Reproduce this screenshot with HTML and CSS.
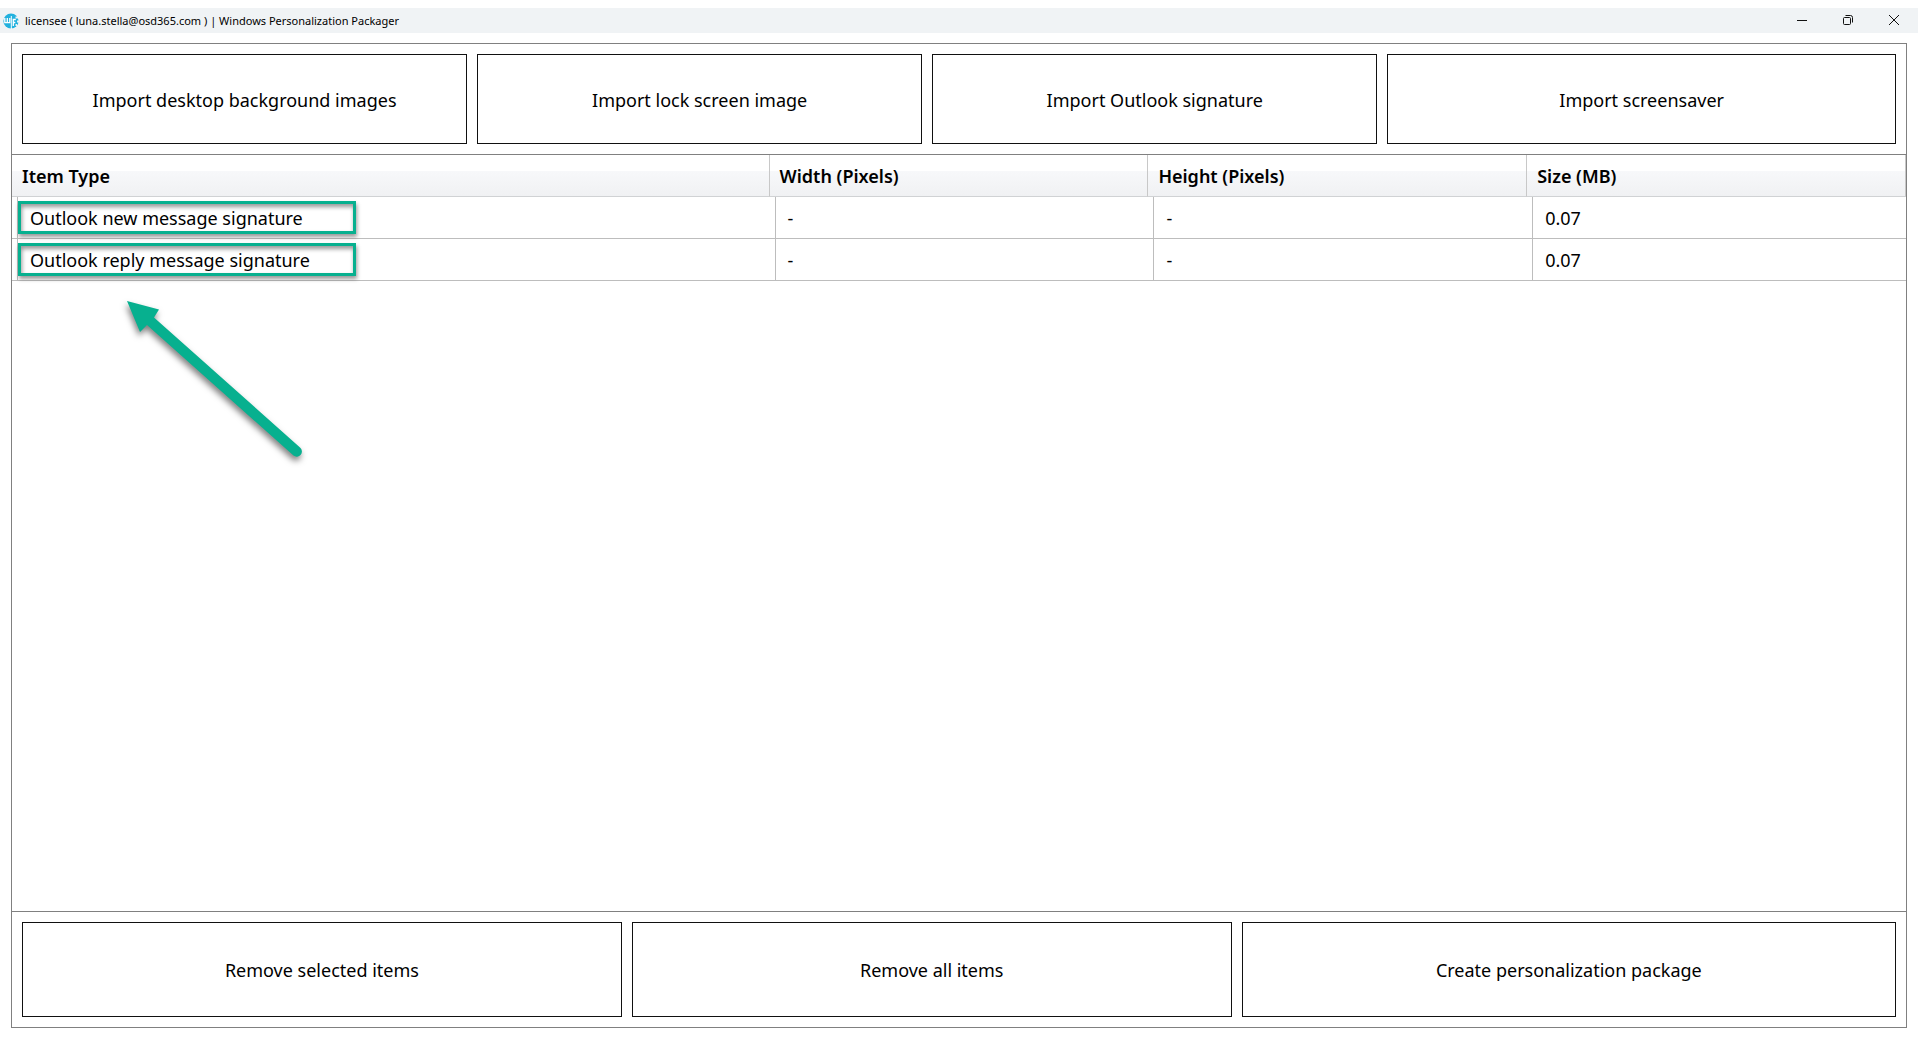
FILE: index.html
```html
<!DOCTYPE html>
<html lang="en">
  <head>
    <meta charset="UTF-8" />
    <title>Windows Personalization Packager</title>
    <link rel="stylesheet" href="styles.css">
  </head>

  <body>
    <!-- title bar -->
    <header class="titlebar">
      <svg class="logo" viewBox="0 0 16 16" aria-hidden="true">
        <circle cx="8" cy="8" r="7.6" fill="#22b1de" />
        <path d="M1.8 5v4.600h5V5M4.300 5v4.600" fill="none" stroke="#fff" stroke-width="1.300" />
        <path d="M8.300 3v13" stroke="#fff" stroke-width="1" />
        <path d="M10.300 13V6.500h2.500M10.300 9.500h2" fill="none" stroke="#fff" stroke-width="1.300" />
        <path d="M12.500 3.500h4v2h-4zM14 7.500h2.500v2H14zM12.500 11h1.500v2h-1.500z" fill="#f0f3f5" />
      </svg>
      <span class="title">licensee ( luna.stella@osd365.com ) | Windows Personalization Packager</span>
      <button class="win-btn" type="button" aria-label="Minimize">
        <svg viewBox="0 0 12 12"><path d="M1 6.5h10" /></svg>
      </button>
      <button class="win-btn" type="button" aria-label="Restore">
        <svg viewBox="0 0 12 12">
          <rect x="1.5" y="3.5" width="7" height="7" rx="1" />
          <path d="M3.5 1.5H8.5a2 2 0 0 1 2 2V8.5" />
        </svg>
      </button>
      <button class="win-btn" type="button" aria-label="Close">
        <svg viewBox="0 0 12 12"><path d="M1 1l10 10M11 1L1 11" /></svg>
      </button>
    </header>

    <main class="frame">
      <!-- import buttons -->
      <div class="actions import">
        <button type="button">Import desktop background images</button>
        <button type="button">Import lock screen image</button>
        <button type="button">Import Outlook signature</button>
        <button type="button">Import screensaver</button>
      </div>

      <!-- imported items -->
      <div class="list">
        <table>
          <thead>
            <tr>
              <th class="type">Item Type</th>
              <th>Width (Pixels)</th>
              <th>Height (Pixels)</th>
              <th>Size (MB)</th>
            </tr>
          </thead>
          <tbody>
            <tr>
              <td>Outlook new message signature<i class="mark"></i></td>
              <td>-</td>
              <td>-</td>
              <td>0.07</td>
            </tr>
            <tr>
              <td>Outlook reply message signature<i class="mark"></i></td>
              <td>-</td>
              <td>-</td>
              <td>0.07</td>
            </tr>
          </tbody>
        </table>
        <!-- arrow pointing at the marked rows -->
        <svg class="arrow" viewBox="0 0 200 180" aria-hidden="true">
          <path d="M10 11L42 19.5L37 27.5L183 157.5A5 5 0 0 1 176.5 165.5L30 35L23 42Z" />
        </svg>
      </div>

      <!-- bottom buttons -->
      <div class="actions manage">
        <button type="button">Remove selected items</button>
        <button type="button">Remove all items</button>
        <button type="button">Create personalization package</button>
      </div>
    </main>
  </body>
</html>
```

FILE: styles.css
```css
* {
  margin: 0;
  padding: 0;
  box-sizing: border-box;
}
body {
  display: flex;
  flex-direction: column;
  min-height: 100vh;
  padding-top: 8px;
  background-color: #fff;
  color: #000;
  font-family: "Segoe UI", "Noto Sans", sans-serif;
  font-size: 18px;
  line-height: 24px;
}
button {
  border: none;
  background: none;
  color: inherit;
  font: inherit;
}

/* title bar */
.titlebar {
  display: flex;
  align-items: center;
  height: 25px;
  padding: 0 1px 0 3px;
  background-color: #f0f3f5;
}
.logo {
  width: 16px;
  height: 16px;
  margin-right: 6px;
}
.title {
  flex: 1;
  font-size: 11px;
  line-height: 16px;
}
.win-btn {
  width: 46px;
  height: 25px;
  padding-bottom: 2px;
}
.win-btn svg {
  display: block;
  width: 12px;
  height: 12px;
  margin: 0 auto;
  fill: none;
  stroke: #111;
}

/* window content */
.frame {
  flex: 1;
  display: flex;
  flex-direction: column;
  margin: 10px 11px 11px;
  border: 1px solid #808080;
}
.actions {
  display: grid;
  gap: 10px;
  padding: 10px;
}
.actions button {
  border: 1px solid #111;
}
.import {
  grid-template-columns: 7fr 7fr 7fr 8fr;
  border-bottom: 1px solid #808080;
}
.import button {
  height: 90px;
  padding-top: 2px;
}
.manage {
  grid-template-columns: 11fr 11fr 12fr;
  border-top: 1px solid #808080;
}
.manage button {
  height: 95px;
}

/* item list */
.list {
  position: relative;
  flex: 1;
}
table {
  width: 100%;
  table-layout: fixed;
  border-spacing: 0;
}
th,
td {
  height: 42px;
  text-align: left;
}
th {
  padding-left: 10px;
  border-right: 1px solid #c8c8c8;
  border-bottom: 1px solid #d0d2d4;
  background: linear-gradient(#fff 40%, #f7f8fa 40%, #f0f1f3);
  font-weight: 600;
}
.type {
  width: 40%;
}
/* cell lines sit a little to the right of the header lines */
td {
  position: relative;
  padding-left: 18px;
  border-bottom: 1px solid #bdbdbd;
  background: linear-gradient(#bdbdbd, #bdbdbd) 5px 0 / 1px 100% no-repeat;
}

/* highlights */
.mark {
  position: absolute;
  left: 6px;
  top: 4px;
  width: 338px;
  height: 33px;
  border: 3px solid #07b08f;
  box-shadow: 1px 3px 4px rgba(0, 0, 0, 0.4), inset 1px 3px 4px rgba(0, 0, 0, 0.4);
}
.arrow {
  position: absolute;
  left: 105px;
  top: 135px;
  width: 200px;
  height: 180px;
  fill: #07b08f;
  filter: drop-shadow(-1px 4px 3px rgba(0, 0, 0, 0.5));
}
```
